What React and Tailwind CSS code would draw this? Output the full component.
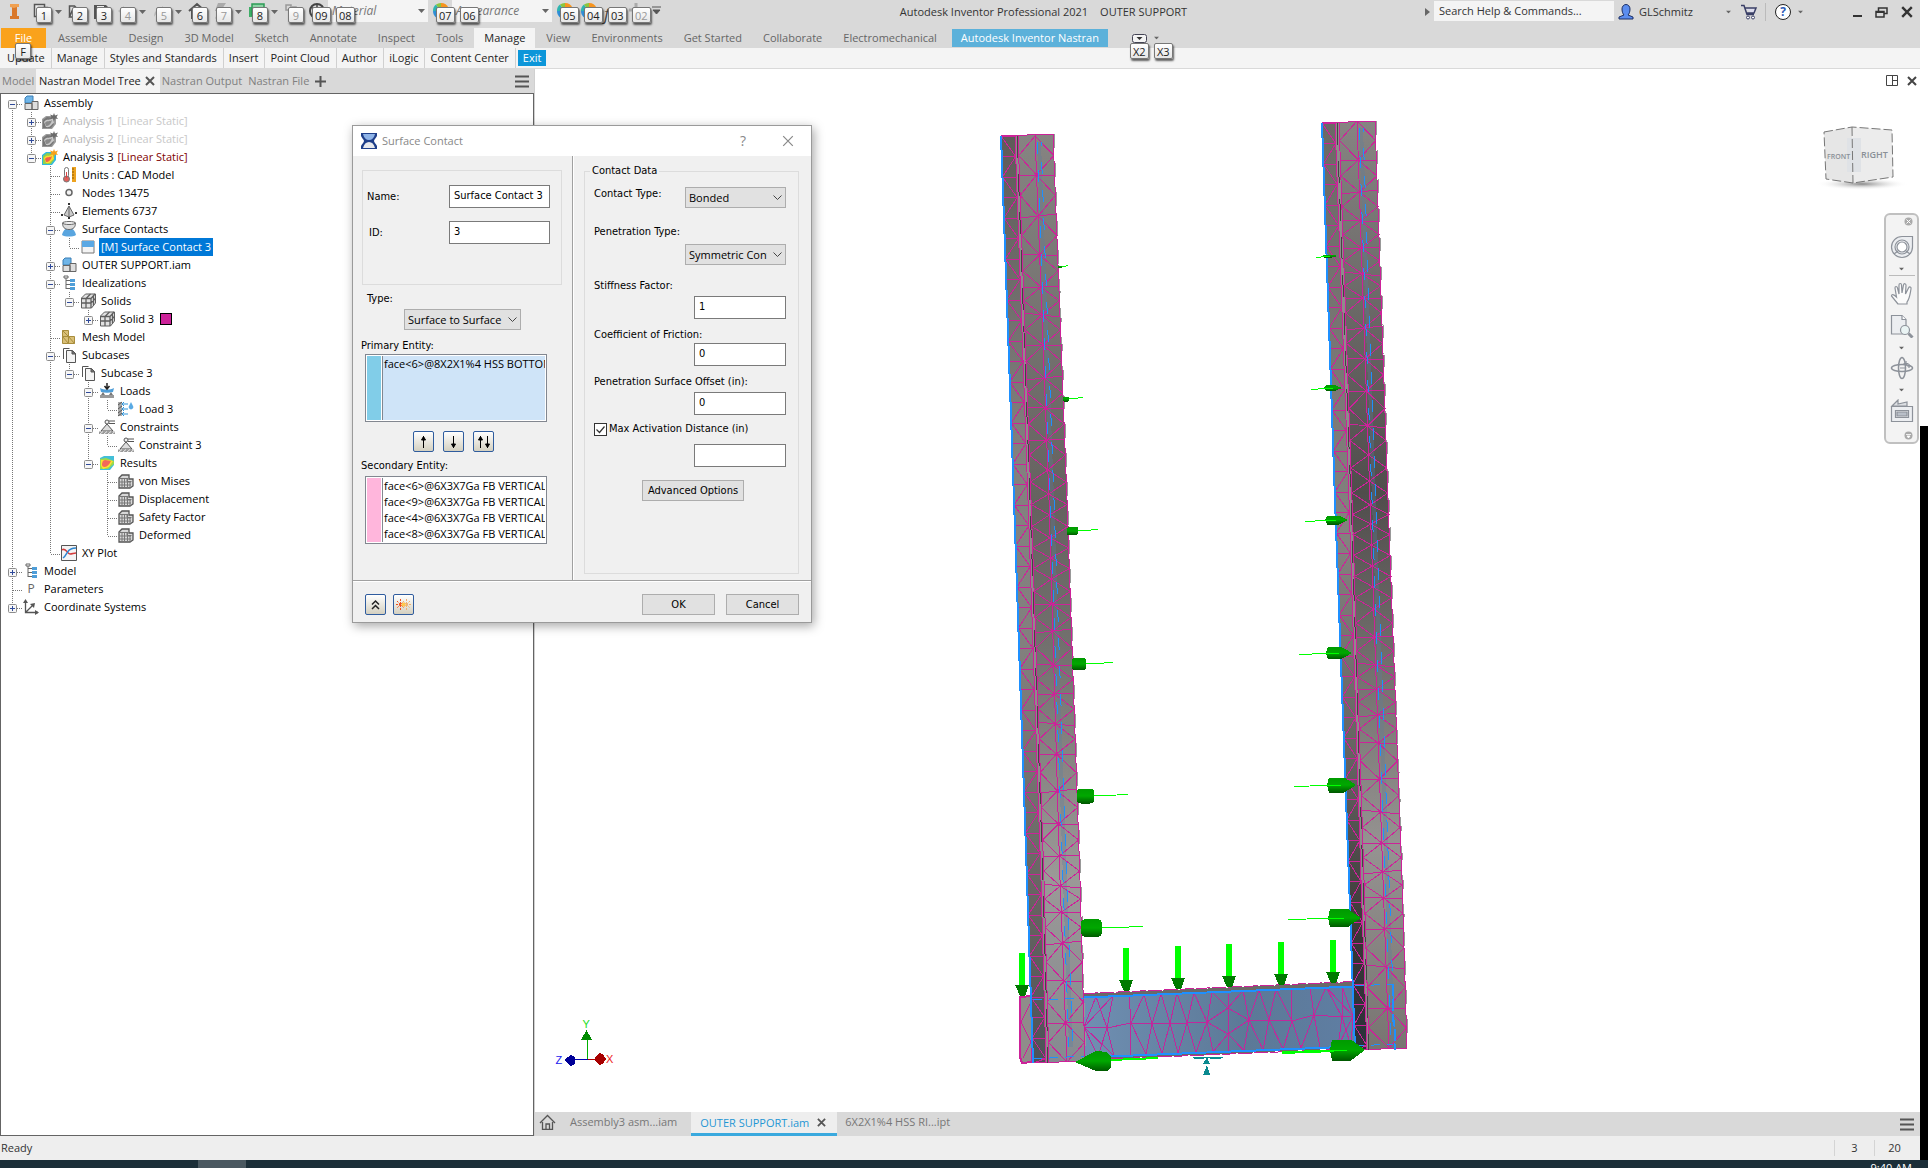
import { useState } from 'react';

const UI = "font-['Open_Sans','Noto_Sans',sans-serif]";
const DLG = "font-['DejaVu_Sans_Condensed','DejaVu_Sans',sans-serif]";

/* ---------- small shared pieces ---------- */

function Arrow({ className = '' }) {
    return (
        <svg width="7" height="4" viewBox="0 0 7 4" className={`shrink-0 ${className}`}>
            <path d="M0 0h7L3.500 4z" fill="#666" />
        </svg>
    );
}

function KeyTip({ text, dim, className = '' }) {
    return (
        <span
            className={`absolute z-10 flex h-4 min-w-4 items-center justify-center rounded-[2px] border border-[#777] bg-gradient-to-b from-white to-[#e6e6e6] px-[2px] text-[11px] leading-none shadow-[1px_2px_2px_rgba(0,0,0,0.6)] ${
                dim ? 'text-[#999]' : 'text-[#222]'
            } ${className}`}
        >
            {text}
        </span>
    );
}

function Cross({ size = 10, color = '#555', width = 2 }) {
    return (
        <svg width={size} height={size} viewBox="0 0 10 10" className="shrink-0">
            <path d="M1 1l8 8M9 1l-8 8" stroke={color} strokeWidth={width} />
        </svg>
    );
}

function Burger() {
    return (
        <svg width="14" height="13" viewBox="0 0 14 13" className="shrink-0">
            <path d="M0 1.500h14M0 6.500h14M0 11.500h14" stroke="#555" strokeWidth="2" />
        </svg>
    );
}

function Wheel() {
    return (
        <svg width="18" height="18" viewBox="0 0 18 18">
            <path d="M9 9L9 1A8 8 0 0 1 16.500 6z" fill="#f7941e" />
            <path d="M9 9L16.500 6A8 8 0 0 1 14 15.500z" fill="#f2582c" />
            <path d="M9 9L14 15.500A8 8 0 0 1 5 16z" fill="#c65ba0" />
            <path d="M9 9L5 16A8 8 0 0 1 1 9z" fill="#2f8fd8" />
            <path d="M9 9L1 9A8 8 0 0 1 4 2.500z" fill="#2fb5b0" />
            <path d="M9 9L4 2.500A8 8 0 0 1 9 1z" fill="#8cc63f" />
        </svg>
    );
}

const quickIcons = {
    new: (
        <path d="M2.500 2.500h10v12h-10zM6.500 5.500h9v11h-9z" fill="#eee" stroke="#555" strokeWidth="1.500" />
    ),
    open: (
        <path d="M1.500 15V4h5l2 2h5v3M1.500 15l3-7h12l-3 7z" fill="#ddd" stroke="#555" strokeWidth="1.500" />
    ),
    save: (
        <>
            <path d="M2 3h12l2 2v12H2z" fill="#555" />
            <path d="M5 4h7v4H5zM4 10h10v6H4z" fill="#eee" />
        </>
    ),
    undo: <path d="M2 9l6-5v3c6 0 8 3 8 8-2-4-4-4-8-4v3z" fill="#bbb" />,
    redo: <path d="M16 9l-6-5v3c-6 0-8 3-8 8 2-4 4-4 8-4v3z" fill="#bbb" />,
    home: (
        <path d="M1 9l8-7 8 7M4 8v8h10V8M7.500 16v-5h3v5" fill="none" stroke="#555" strokeWidth="2" />
    ),
    bolt: <path d="M6 1h8l-4 6h4L3 17l3-8H3z" fill="#aaa" />,
    window: (
        <>
            <path d="M1 5h11v10H1z" fill="#3fae67" />
            <path d="M4 2h12v11H4z" fill="#8fd3a6" stroke="#2d9c55" strokeWidth="1.500" />
        </>
    ),
    nodes: (
        <path d="M2 3h5v5H2zM8 5h4v4M10 10h5v5h-5z" fill="none" stroke="#999" strokeWidth="1.500" />
    ),
    globe: (
        <>
            <circle cx="9" cy="9" r="7" fill="#ddd" stroke="#444" strokeWidth="2" />
            <path d="M3 5l6 4 6-4M9 9v7M9 2v7" stroke="#444" strokeWidth="1.500" fill="none" />
        </>
    ),
    plus: <path d="M8 1v14M1 8h14" stroke="#aaa" strokeWidth="3" />,
};

function QuickButton({ icon, tip, dim, arrow, label, className }) {
    return (
        <button type="button" aria-label={label} className={`relative flex h-7 items-start pt-[2px] ${className}`}>
            {icon === 'wheel' ? (
                <Wheel />
            ) : (
                <svg width="18" height="18" viewBox="0 0 18 18" className="shrink-0">
                    {quickIcons[icon]}
                </svg>
            )}
            {arrow && <Arrow className="mt-2 ml-[5px]" />}
            <KeyTip text={tip} dim={dim} className="top-[7px] left-1" />
        </button>
    );
}

function QuickCombo({ text, tip }) {
    return (
        <button
            type="button"
            className="relative flex h-[22px] w-[100px] items-center justify-between bg-[#f4f4f4] pr-[3px] pl-1 text-[12px] text-[#777] italic"
        >
            {text}
            <Arrow />
            <KeyTip text={tip} className="top-[7px] left-2 not-italic" />
        </button>
    );
}

/* ---------- title bar and ribbon ---------- */

function TitleBar() {
    return (
        <header className="flex h-7 shrink-0 justify-between bg-[#d9d9d9] text-[11px] text-[#333]">
            <div className="flex shrink-0">
                <svg width="32" height="28" viewBox="0 0 32 28" className="shrink-0">
                    <path d="M10 4h9v3h-2v9h2v3h-9v-3h2V7h-2z" fill="#d9782b" />
                    <path d="M10 4h9v3h-2l-3 1-4-1z" fill="#f0a050" />
                </svg>
                <QuickButton icon="new" tip="1" arrow label="New" className="w-9" />
                <QuickButton icon="open" tip="2" label="Open" className="w-6" />
                <QuickButton icon="save" tip="3" label="Save" className="w-6" />
                <QuickButton icon="undo" tip="4" dim arrow label="Undo" className="w-9" />
                <QuickButton icon="redo" tip="5" dim arrow label="Redo" className="w-9" />
                <QuickButton icon="home" tip="6" label="Home" className="w-6" />
                <QuickButton icon="bolt" tip="7" dim arrow label="Update" className="w-9" />
                <QuickButton icon="window" tip="8" arrow label="Select" className="w-9" />
                <QuickButton icon="nodes" tip="9" dim label="Properties" className="w-6" />
                <QuickButton icon="globe" tip="09" label="Materials" className="w-5" />
                <QuickCombo text="Material" tip="08" />
                <QuickButton icon="wheel" tip="07" label="Appearance" className="ml-1 w-5" />
                <QuickCombo text="Appearance" tip="06" />
                <QuickButton icon="wheel" tip="05" label="Adjust" className="ml-1 w-6" />
                <QuickButton icon="wheel" tip="04" label="Clear" className="w-6" />
                <button type="button" className="relative w-6 text-left text-[17px] text-[#444] italic">
                    fx
                    <KeyTip text="03" className="top-[7px] left-1 not-italic" />
                </button>
                <QuickButton icon="plus" tip="02" dim label="Add" className="w-6" />
                <svg width="10" height="9" viewBox="0 0 10 9" className="mt-[6px]">
                    <path d="M0 1h9M1 4h7L4.500 8z" fill="#555" stroke="#555" />
                </svg>
            </div>
            <h1 className="flex h-6 flex-1 items-center justify-center gap-3">
                <span>Autodesk Inventor Professional 2021</span>
                <span>OUTER SUPPORT</span>
            </h1>
            <div className="flex shrink-0 justify-end">
                <div className="flex h-6 items-center">
                    <svg width="5" height="8" viewBox="0 0 5 8" className="mr-1">
                        <path d="M0 0l5 4-5 4z" fill="#666" />
                    </svg>
                    <input
                        aria-label="Search"
                        placeholder="Search Help & Commands..."
                        className="mb-[3px] h-5 w-[180px] bg-[#f4f4f4] px-[5px] text-[11px] placeholder-[#333] outline-none"
                    />
                    <svg width="16" height="16" viewBox="0 0 16 16" className="ml-1">
                        <path d="M4 5a4 4.500 0 0 1 8 0c0 3-1 5-2 6l5 2v2H1v-2l5-2c-1-1-2-3-2-6z" fill="#5b8def" stroke="#1c2f66" />
                    </svg>
                    <span className="ml-[5px] w-[86px]">GLSchmitz</span>
                    <Arrow className="scale-75" />
                    <svg width="18" height="16" viewBox="0 0 18 16" className="ml-2">
                        <path d="M1 1.500h3l3 9h7M4.500 4H16l-2 5H6.500" fill="#dde" stroke="#3a3f66" strokeWidth="1.500" />
                        <circle cx="8" cy="13.500" r="1.500" fill="#fff" stroke="#3a3f66" />
                        <circle cx="13" cy="13.500" r="1.500" fill="#fff" stroke="#3a3f66" />
                    </svg>
                    <span className="ml-[7px] h-[18px] w-px bg-[#bbb]" />
                    <button
                        type="button"
                        className="ml-[9px] flex h-4 w-4 items-center justify-center rounded-full border border-[#222] bg-white text-[12px] leading-none font-bold text-[#2e5cb8]"
                    >
                        ?
                    </button>
                    <Arrow className="ml-[6px] scale-75" />
                </div>
                <div className="flex h-6 items-center gap-[13px] pr-[7px] pl-[49px]">
                    <button type="button" aria-label="Minimize" className="mt-2 h-[2px] w-[9px] bg-[#333]" />
                    <button type="button" aria-label="Restore">
                        <svg width="13" height="11" viewBox="0 0 13 11">
                            <path d="M3.500 4V1H12v5.500H9.500M1 4.500h8V10H1z" fill="none" stroke="#333" strokeWidth="1.500" />
                            <path d="M1 5h8" stroke="#333" strokeWidth="2" />
                        </svg>
                    </button>
                    <button type="button" aria-label="Close">
                        <Cross size={12} color="#333" />
                    </button>
                </div>
            </div>
        </header>
    );
}

const tabs = [
    'Assemble',
    'Design',
    '3D Model',
    'Sketch',
    'Annotate',
    'Inspect',
    'Tools',
    'Manage',
    'View',
    'Environments',
    'Get Started',
    'Collaborate',
    'Electromechanical',
];

function Ribbon() {
    const panels = [
        'Update',
        'Manage',
        'Styles and Standards',
        'Insert',
        'Point Cloud',
        'Author',
        'iLogic',
        'Content Center',
    ];
    return (
        <>
            <nav className="flex h-5 shrink-0 bg-[#d9d9d9] pl-px text-[11px] text-[#666]">
                <button type="button" className="relative w-[45px] bg-[#faa21b] text-white">
                    File
                    <KeyTip text="F" className="top-[15px] left-[14px]" />
                </button>
                <div className="flex gap-px pl-[2px]">
                    {tabs.map((t) => (
                        <button
                            key={t}
                            type="button"
                            className={`px-[10px] ${t === 'Manage' ? 'bg-[#f4f4f4] text-[#222]' : ''}`}
                        >
                            {t}
                        </button>
                    ))}
                </div>
                <button type="button" className="my-px ml-[5px] bg-[#5cb1da] px-[9px] text-white">
                    Autodesk Inventor Nastran
                </button>
                <div className="relative ml-6 flex items-center gap-[6px]">
                    <svg width="15" height="9" viewBox="0 0 15 9">
                        <rect x=".5" y=".5" width="14" height="8" rx="2" fill="#f4f4f4" stroke="#445" />
                        <path d="M4.500 3h6l-3 3z" fill="#333" />
                    </svg>
                    <Arrow className="scale-75" />
                    <KeyTip text="X2" className="top-[15px] -left-[2px]" />
                    <KeyTip text="X3" className="top-[15px] left-[22px]" />
                </div>
            </nav>
            <div className="flex h-[21px] shrink-0 items-stretch border-b border-[#d9d9d9] bg-[#f4f4f4] text-[11px] text-[#222]">
                {panels.map((p) => (
                    <button
                        key={p}
                        type="button"
                        className="border-r border-[#d0d0d0] pr-[6px] pl-[5px] first:pl-[7px]"
                    >
                        {p}
                    </button>
                ))}
                <button type="button" className="mx-[2px] my-[2px] bg-[#0c96d9] px-[5px] text-white">
                    Exit
                </button>
            </div>
        </>
    );
}

/* ---------- model tree ---------- */

function AssemblyIcon() {
    return (
        <>
            <path d="M2 3l2-2h6v7H2z" fill="#6fb5e8" stroke="#3a7fb5" />
            <path d="M2 8.500h7v6H2zM9 6.500h6v8H9z" fill="#dedede" stroke="#666" />
        </>
    );
}

function CubeGrid() {
    return (
        <>
            <path d="M1.500 5l4-4h10v9l-4 5h-10z" fill="#e2e2e2" stroke="#5f5f5f" />
            <path d="M1.500 5.500h9.500v9.500M6 5.500V15M1.500 10H11M11 5.500L15 1M6 5.500L10.500 1M11 10l4.500-4.500M13.500 3v9.500" fill="none" stroke="#5f5f5f" strokeWidth="1.300" />
        </>
    );
}

function PagesIcon() {
    return (
        <>
            <path d="M2.500 12V1.500h6" fill="none" stroke="#555" />
            <path d="M5.500 3.500h6l3 3v9h-9z" fill="#f4f4f4" stroke="#555" />
            <path d="M11 3.500v3.500h3.500z" fill="#777" stroke="#555" />
        </>
    );
}

function HierarchyIcon() {
    return (
        <>
            <path d="M3 1h4v2H3zM5 3v11M5 5.500h4M5 9.500h4M5 13.500h4" fill="none" stroke="#666" />
            <path d="M9 4h5v3H9zM9 8h5v3H9zM9 12h5v3H9z" fill="#4f9ed8" />
        </>
    );
}

function AnalysisIcon({ dim }) {
    return (
        <>
            <path d="M0 6l4-3h10v8l-4 5H0z" fill={dim ? '#9a9a9a' : '#2fb8e0'} />
            <path d="M1 7l4-3 7 1v6l-3 4H1z" fill={dim ? '#777' : '#8fd14f'} />
            <path d="M2 9c3-4 6-1 9-4l1 5c-3 1-3 5-8 4z" fill={dim ? '#c8c8c8' : '#ffd92e'} />
            <path d="M3 10c2-3 5-1 7-3-1 4-3 6-6 6z" fill={dim ? '#8a8a8a' : '#f0604a'} />
            <path
                d="M12 0l1 2.500 3-1-1.500 2.500L16 6l-3-.5L12 8l-1-2.500L8 6l1.500-2L8 1.500l3 1z"
                fill={dim ? '#6a6a6a' : '#f7a11a'}
            />
        </>
    );
}

function ConstraintIcon() {
    return (
        <>
            <circle cx="8" cy="3" r="2" fill="#eee" stroke="#555" />
            <path d="M10 2h6M10 4.500h6" stroke="#555" />
            <path d="M8 5l6 7H2z" fill="#ddd" stroke="#555" />
            <path d="M0 12.500h16V15H0z" fill="#999" />
            <path d="M1 15l3-2.500M5 15l3-2.500M9 15l3-2.500M13 15l3-2.500" stroke="#eee" />
        </>
    );
}

function MeshIcon() {
    return (
        <>
            <path d="M1 5l3-3h7v4h4v7l-3 2H1z" fill="#d8d8d8" stroke="#555" strokeWidth="1.300" />
            <path d="M1 5.500h8v3h4.500M1 9h12M1 12h12M4 5v10M6.500 5v10M9.500 5v10M12 8.500V15" fill="none" stroke="#777" />
        </>
    );
}

const treeIcons = {
    assembly: <AssemblyIcon />,
    dim: <AnalysisIcon dim />,
    analysis: <AnalysisIcon />,
    units: (
        <>
            <rect x="3.500" y=".5" width="4" height="10" rx="2" fill="#fff" stroke="#777" />
            <circle cx="5.500" cy="12" r="3" fill="#e0605a" stroke="#777" />
            <path d="M5 5h1v6H5z" fill="#d44" />
            <path d="M11 0h4v15h-4z" fill="#eda320" />
            <path d="M11 2h2M11 5h2M11 8h2M11 11h2" stroke="#8a5a00" />
        </>
    ),
    node: <circle cx="8" cy="7.500" r="3" fill="#f4f4f4" stroke="#666" strokeWidth="1.500" />,
    element: (
        <>
            <path d="M8 3l5 9-5 2-5-2z" fill="#ccc" stroke="#666" />
            <path d="M8 3v11" stroke="#666" />
            <path d="M7 0h2v2H7zM0 11h2v2H0zM14 9h2v2h-2zM7 14h2v2H7z" fill="#333" />
        </>
    ),
    contacts: (
        <>
            <path d="M8 7c4 0 6 3 7 7-3 2-11 2-14 0 1-4 3-7 7-7z" fill="#59a5df" />
            <path d="M1.500 2c0 4 2 6.500 6.500 6.500S14.500 6 14.500 2z" fill="#ddd" stroke="#666" />
            <ellipse cx="8" cy="2" rx="6.500" ry="1.500" fill="#f4f4f4" stroke="#666" />
        </>
    ),
    contact: (
        <>
            <path d="M2 2h12v12H2z" fill="#f4f4f4" stroke="#777" />
            <path d="M2 2h12v6H2z" fill="#5aa8e4" />
        </>
    ),
    hierarchy: <HierarchyIcon />,
    solids: <CubeGrid />,
    meshmodel: (
        <>
            <path d="M1.500 1.500h6v6h-6zM1.500 7.500h6v7h-6zM7.500 7.500h6v7h-6z" fill="#d9bf77" stroke="#a88d3c" />
            <path d="M1.500 1.500l6 6M1.500 7.500l6 7M7.500 7.500l6 7" stroke="#a88d3c" />
        </>
    ),
    pages: <PagesIcon />,
    loads: (
        <>
            <path d="M1 5c4 2 10 2 14 0l-1 4c-4 1-8 1-12 0z" fill="#4f9ed8" />
            <path d="M8 0v5M5.500 3L8 6l2.500-3" fill="none" stroke="#222" strokeWidth="1.500" />
            <path d="M4 9l-2 3h4zM12 9l-2 3h4z" fill="#777" />
            <path d="M1 12h14v3H1z" fill="#999" />
        </>
    ),
    load: (
        <>
            <path d="M0 1h4v14H0z" fill="#aaa" />
            <path d="M0 4l4-3M0 8l4-3M0 12l4-3M0 15l4-3" stroke="#555" />
            <path d="M4 3h6M4 8h6M4 13h6M6 1L4 3l2 2M6 6L4 8l2 2M6 11l-2 2 2 2" fill="none" stroke="#2f93d8" />
            <path d="M13 1l2 4a2.300 2.300 0 1 1-4 0z" fill="#5aaae4" />
        </>
    ),
    constraint: <ConstraintIcon />,
    results: (
        <>
            <path d="M1 3l4-2h10v9l-4 5H1z" fill="#43bfd8" />
            <path d="M1 4l6-1 8 3v3l-6 5H1z" fill="#9ed94a" />
            <path d="M2 5l6 0 6 1-4 6-6 2-2-3z" fill="#ffe02e" />
            <path d="M4 6c2-2 5 0 8 0-2 4-4 6-7 6-3-1-2-4-1-6z" fill="#f2695a" />
        </>
    ),
    mesh: <MeshIcon />,
    plot: (
        <>
            <path d="M.5.500h15v15H.5z" fill="#f4f4f4" stroke="#555" />
            <path d="M1 5c4-3 5 4 8 4 2 0 4-1 6-1" fill="none" stroke="#d43c3c" strokeWidth="1.500" />
            <path d="M2 13c4-3 4-8 8-9 2-1 4-1 5-1" fill="none" stroke="#2f86d0" strokeWidth="1.500" />
        </>
    ),
    coord: (
        <>
            <path d="M2.500 2v11.500H15M2.500 13.500L10 6" fill="none" stroke="#555" strokeWidth="1.300" />
            <path d="M0 4l2.500-4L5 4zM12 11l4 2.500-4 2.500zM7 5l5-1-1 5z" fill="#555" />
        </>
    ),
};

// lanes: one character per indent level. "|" runs through, "+" branches,
// "L" ends there, "r" starts there and " " leaves the lane empty.
const tree = [
    { lanes: 'r', box: '-', icon: 'assembly', text: 'Assembly' },
    { lanes: '|+', box: '+', icon: 'dim', text: 'Analysis 1', tag: '[Linear Static]', dim: true },
    { lanes: '|+', box: '+', icon: 'dim', text: 'Analysis 2', tag: '[Linear Static]', dim: true },
    { lanes: '|L', box: '-', icon: 'analysis', text: 'Analysis 3', tag: '[Linear Static]' },
    { lanes: '| +', icon: 'units', text: 'Units : CAD Model' },
    { lanes: '| +', icon: 'node', text: 'Nodes 13475' },
    { lanes: '| +', icon: 'element', text: 'Elements 6737' },
    { lanes: '| +', box: '-', icon: 'contacts', text: 'Surface Contacts' },
    { lanes: '| |L', icon: 'contact', text: '[M] Surface Contact 3', selected: true },
    { lanes: '| +', box: '+', icon: 'assembly', text: 'OUTER SUPPORT.iam' },
    { lanes: '| +', box: '-', icon: 'hierarchy', text: 'Idealizations' },
    { lanes: '| |L', box: '-', icon: 'solids', text: 'Solids' },
    { lanes: '| | L', box: '+', icon: 'solids', text: 'Solid 3', swatch: true },
    { lanes: '| +', icon: 'meshmodel', text: 'Mesh Model' },
    { lanes: '| +', box: '-', icon: 'pages', text: 'Subcases' },
    { lanes: '| |L', box: '-', icon: 'pages', text: 'Subcase 3' },
    { lanes: '| | +', box: '-', icon: 'loads', text: 'Loads' },
    { lanes: '| | |L', icon: 'load', text: 'Load 3' },
    { lanes: '| | +', box: '-', icon: 'constraint', text: 'Constraints' },
    { lanes: '| | |L', icon: 'constraint', text: 'Constraint 3' },
    { lanes: '| | L', box: '-', icon: 'results', text: 'Results' },
    { lanes: '| |  +', icon: 'mesh', text: 'von Mises' },
    { lanes: '| |  +', icon: 'mesh', text: 'Displacement' },
    { lanes: '| |  +', icon: 'mesh', text: 'Safety Factor' },
    { lanes: '| |  L', icon: 'mesh', text: 'Deformed' },
    { lanes: '| L', icon: 'plot', text: 'XY Plot' },
    { lanes: '+', box: '+', icon: 'hierarchy', text: 'Model' },
    { lanes: '+', letter: 'P', text: 'Parameters' },
    { lanes: 'L', box: '+', icon: 'coord', text: 'Coordinate Systems' },
];

// subcases close their own lane, so everything below them only keeps lanes 0 and 2
function Lane({ kind, box }) {
    const top = kind === 'r' ? 10 : 0;
    const bottom = kind === 'L' ? 10 : 18;
    return (
        <svg width="19" height="18" viewBox="0 0 19 18" className="shrink-0">
            {kind !== ' ' && (
                <path d={`M9.500 ${top}V${bottom}`} stroke="#777" strokeDasharray="1 1" />
            )}
            {kind !== ' ' && kind !== '|' && (
                <path d="M10 10.500H19" stroke="#777" strokeDasharray="1 1" />
            )}
            {box && (
                <>
                    <rect x="5.500" y="6.500" width="8" height="8" rx="1" fill="#f6f6f6" stroke="#8c8c8c" />
                    <path d={box === '+' ? 'M7 10.500h5M9.500 8v5' : 'M7 10.500h5'} stroke="#2f4a9a" />
                </>
            )}
        </svg>
    );
}

function TreeRow({ row }) {
    const lanes = row.lanes.split('');
    return (
        <li className="flex h-[18px] items-center">
            {lanes.map((kind, i) => (
                <Lane key={i} kind={kind} box={i === lanes.length - 1 ? row.box : undefined} />
            ))}
            <span className="flex w-[18px] shrink-0 justify-center text-[12px] text-[#666]">
                {row.letter ? (
                    row.letter
                ) : (
                    <svg width="16" height="16" viewBox="0 0 16 16">
                        {treeIcons[row.icon]}
                    </svg>
                )}
            </span>
            <span
                className={`ml-[2px] flex h-[18px] items-center px-[2px] ${
                    row.selected ? 'bg-[#0078d7] text-white' : row.dim ? 'text-[#b4b4b4]' : 'text-black'
                }`}
            >
                {row.text}
                {row.tag && (
                    <span className={`ml-1 ${row.dim ? 'text-[#c8c8c8]' : 'text-[#800000]'}`}>{row.tag}</span>
                )}
                {row.swatch && <span className="ml-[6px] h-3 w-3 border border-black bg-[#cc2299]" />}
            </span>
        </li>
    );
}

function ModelPanel() {
    return (
        <aside className="flex w-[534px] shrink-0 flex-col bg-[#d9d9d9] text-[11px]">
            <div className="flex h-6 shrink-0 items-center text-[#808080]">
                <button type="button" className="w-9 pl-[2px] text-left">
                    Model
                </button>
                <button
                    type="button"
                    className="flex h-6 items-center gap-1 bg-[#f4f4f4] pr-[5px] pl-[3px] text-[#222]"
                >
                    Nastran Model Tree
                    <Cross />
                </button>
                <button type="button" className="ml-[2px]">
                    Nastran Output
                </button>
                <button type="button" className="ml-[6px]">
                    Nastran File
                </button>
                <button type="button" aria-label="Add panel" className="ml-[6px]">
                    <svg width="11" height="11" viewBox="0 0 11 11">
                        <path d="M5.500 0v11M0 5.500h11" stroke="#555" strokeWidth="2" />
                    </svg>
                </button>
                <button type="button" aria-label="Panel menu" className="mr-[5px] ml-auto">
                    <Burger />
                </button>
            </div>
            <ul className="flex-1 border border-[#646464] bg-white pl-[2px]">
                {tree.map((row, i) => (
                    <TreeRow key={i} row={row} />
                ))}
            </ul>
        </aside>
    );
}

/* ---------- 3D canvas ---------- */

const MESH = '#cc2299';
const BLUE = '#1e90ff';

// x of an edge at height y, walking through a list of [x, y] points
function at(line, y) {
    for (let i = 1; i < line.length; i++) {
        const [x0, y0] = line[i - 1];
        const [x1, y1] = line[i];
        if (y <= y1 || i === line.length - 1) return x0 + ((x1 - x0) * (y - y0)) / (y1 - y0);
    }
    return 0;
}

function pts(line) {
    return line.map((p) => p.join(',')).join(' ');
}

function faceMesh(left, mid, right, ys, bare) {
    let d = '';
    ys.forEach((y, i) => {
        const mx = at(mid, y);
        const next = ys[i + 1];
        if (i > 0 && next && !(y > bare[0] && y < bare[1])) {
            const tilt = ((i * 7) % 5) - 2;
            d += `M${at(left, y + tilt)} ${y + tilt}L${mx} ${y}L${at(right, y - tilt)} ${y - tilt}`;
        }
        if (next) {
            const h = (y + next) / 2;
            d += `M${mx} ${y}L${at(left, h)} ${h}L${at(mid, next)} ${next}`;
            d += `M${mx} ${y}L${at(right, h)} ${h}L${at(mid, next)} ${next}`;
        }
    });
    return d;
}

function flangeMesh(left, right, top, bottom) {
    let d = '';
    let flip = false;
    for (let y = top; y < bottom; y += 20.500) {
        const y2 = Math.min(y + 20.500, bottom);
        d += `M${at(left, y)} ${y}L${at(right, y)} ${y}`;
        d += flip
            ? `M${at(right, y)} ${y}L${at(left, y2)} ${y2}`
            : `M${at(left, y)} ${y}L${at(right, y2)} ${y2}`;
        flip = !flip;
    }
    return d;
}

const leftBeam = {
    outer: [[1001, 136], [1014, 500], [1027, 880], [1033, 1063]],
    groove: [[1015, 136], [1028, 500], [1041, 880], [1046, 1063]],
    face: [[1018, 136], [1031, 500], [1044, 880], [1049, 1063]],
    mid: [[1035, 135], [1049, 500], [1060, 880], [1067, 1062]],
    right: [[1053, 134], [1067, 500], [1080, 880], [1085, 1061]],
    dash: [[1037, 142], [1050, 500], [1063, 880], [1069, 1047]],
    ys: [136, 175, 216, 255, 287, 315, 345, 378, 408, 440, 470, 494, 515, 538, 558, 579, 604, 631, 665, 694, 724, 754, 791, 824, 856, 886, 912, 943, 981, 1023, 1062],
    bare: [450, 600],
};

const rightBeam = {
    outer: [[1322, 123], [1335, 500], [1349, 880], [1355, 1050]],
    groove: [[1335, 123], [1349, 500], [1361, 880], [1367, 1050]],
    face: [[1339, 122], [1352, 500], [1364, 880], [1369, 1050]],
    mid: [[1357, 121], [1370, 500], [1383, 880], [1389, 1049]],
    right: [[1375, 121], [1388, 500], [1402, 880], [1407, 1048]],
    dash: [[1359, 128], [1372, 500], [1385, 880], [1391, 1048]],
    ys: [121, 160, 192, 221, 248, 274, 298, 328, 359, 391, 426, 455, 481, 505, 524, 545, 566, 587, 609, 637, 665, 689, 715, 743, 779, 812, 843, 872, 898, 929, 967, 1008, 1048],
    bare: [430, 625],
};

function Beam({ beam, wide, narrow }) {
    const { outer, groove, face, mid, right, dash, ys, bare } = beam;
    const top = outer[0][1];
    const bottom = outer[3][1];
    const rev = (l) => [...l].reverse();
    const shifted = dash.map(([x, y]) => [x + 4, y]);
    return (
        <g fill="none">
            <polygon points={pts([...outer, ...rev(groove)])} fill={narrow} />
            <polygon points={pts([...groove, ...rev(face)])} fill="#8d8d8a" />
            <polygon points={pts([...face, ...rev(right)])} fill={wide} />
            <polygon points={pts([...dash, ...rev(shifted)])} fill="#5b7f9f" fillOpacity="0.3" />
            <g stroke={MESH} strokeWidth="1">
                <path d={flangeMesh(outer, groove, top, bottom)} />
                <path d={faceMesh(face, mid, right, ys, bare)} />
                <polyline points={pts(mid)} />
                <polyline points={pts(face)} />
                <polyline points={pts(groove)} />
                <polyline points={pts(right)} />
                <path d={`M${outer[0]}L${right[0]}M${outer[3]}L${right[3]}`} />
            </g>
            <polyline points={pts(groove.map(([x, y]) => [x + 2, y]))} stroke="#444" strokeDasharray="22 16" />
            <polyline points={pts(right.map(([x, y]) => [x + 1, y]))} stroke="#999" strokeDasharray="14 15" />
            <polyline points={pts(dash)} stroke={BLUE} strokeDasharray="12 16" />
            <polyline points={pts(shifted)} stroke={BLUE} strokeDasharray="12 16" strokeDashoffset="8" />
            <polyline points={pts(outer)} stroke={BLUE} strokeWidth="2" />
        </g>
    );
}

// cross beam nodes
const crossMid = [[1084, 1027], [1107, 1028], [1131, 1023], [1152, 1024], [1170, 1023], [1187, 1023], [1207, 1022]];
const crossMid2 = [[1249, 1020], [1269, 1020], [1292, 1021], [1314, 1015], [1342, 1017], [1353, 1016]];
const topX = [1096, 1113, 1129, 1144, 1161, 1177, 1194, 1212, 1228, 1243, 1259, 1276, 1291, 1310, 1326, 1342];
const bottomX = [1098, 1114, 1130, 1146, 1162, 1178, 1196, 1213, 1228, 1244, 1263, 1283, 1301, 1320, 1338, 1351];

function crossMesh() {
    const ty = (x) => 997 - ((x - 1084) * 11) / 270;
    const by = (x) => 1057 - ((x - 1084) * 11) / 270;
    let d = `M${crossMid.join('L')}M${crossMid2.join('L')}`;
    d += 'M1207 1022L1228 1008L1249 1020L1228 1034ZM1228 994V1052';
    [...crossMid, ...crossMid2].forEach(([x, y]) => {
        const near = (list) =>
            [...list].sort((a, b) => Math.abs(a - x) - Math.abs(b - x)).slice(0, 2);
        near(topX).forEach((n) => (d += `M${x} ${y}L${n} ${ty(n)}`));
        near(bottomX).forEach((n) => (d += `M${x} ${y}L${n} ${by(n)}`));
    });
    d += `M1228 1008L1212 ${ty(1212)}M1228 1008L1243 ${ty(1243)}`;
    d += `M1228 1034L1213 ${by(1213)}M1228 1034L1244 ${by(1244)}`;
    return d;
}

// [x, y, width, height, line end]
const pinsLeft = [
    [1058, 267, 4, 2, 1068],
    [1063, 399, 6, 5, 1083],
    [1067, 531, 11, 8, 1098],
    [1072, 664, 14, 12, 1113],
    [1077, 796, 17, 15, 1128],
    [1081, 928, 21, 18, 1143],
];
const pinsRight = [
    [1322, 256, 16, 3, 1316],
    [1324, 388, 18, 6, 1311],
    [1325, 520, 23, 9, 1305],
    [1326, 653, 26, 12, 1299],
    [1327, 785, 29, 15, 1294],
    [1328, 918, 33, 18, 1288],
    [1330, 1050, 35, 21, 1282],
];
const loads = [
    [1022, 953],
    [1126, 948],
    [1178, 946],
    [1229, 944],
    [1281, 942],
    [1333, 940],
];

function Model3D() {
    return (
        <svg viewBox="535 69 1385 1043" className="h-full w-full" preserveAspectRatio="xMidYMid meet">
            <defs>
                <linearGradient id="lw" x1="0" y1="0" x2="0" y2="1">
                    <stop offset="0" stopColor="#868482" />
                    <stop offset=".4" stopColor="#65625f" />
                    <stop offset=".55" stopColor="#72706e" />
                    <stop offset=".8" stopColor="#9b9997" />
                    <stop offset="1" stopColor="#858a90" />
                </linearGradient>
                <linearGradient id="ln" x1="0" y1="0" x2="0" y2="1">
                    <stop offset="0" stopColor="#5e5b59" />
                    <stop offset=".35" stopColor="#83817f" />
                    <stop offset=".55" stopColor="#82807e" />
                    <stop offset=".85" stopColor="#64615f" />
                    <stop offset="1" stopColor="#4d5258" />
                </linearGradient>
                <linearGradient id="rw" x1="0" y1="0" x2="0" y2="1">
                    <stop offset="0" stopColor="#868482" />
                    <stop offset=".4" stopColor="#504d4c" />
                    <stop offset=".55" stopColor="#6c6967" />
                    <stop offset=".78" stopColor="#959391" />
                    <stop offset="1" stopColor="#787471" />
                </linearGradient>
                <linearGradient id="rn" x1="0" y1="0" x2="0" y2="1">
                    <stop offset="0" stopColor="#6b6866" />
                    <stop offset=".45" stopColor="#84827f" />
                    <stop offset=".7" stopColor="#62605e" />
                    <stop offset=".88" stopColor="#383635" />
                    <stop offset="1" stopColor="#2b313b" />
                </linearGradient>
                <linearGradient id="cross" x1="0" y1="0" x2="1" y2="0">
                    <stop offset="0" stopColor="#6f8fb2" />
                    <stop offset=".6" stopColor="#5c7997" />
                    <stop offset="1" stopColor="#5f7ea3" />
                </linearGradient>
                <linearGradient id="pin" x1="0" y1="0" x2="0" y2="1">
                    <stop offset="0" stopColor="#009a00" />
                    <stop offset=".5" stopColor="#00a800" />
                    <stop offset="1" stopColor="#005a00" />
                </linearGradient>
            </defs>

            <g shapeRendering="crispEdges">
                {/* end of the cross beam behind the left post */}
                <path d="M1020 997l12-1v66l-10 1-2-6z" fill="#8f8c8a" stroke={MESH} strokeWidth="2" />
                <path d="M1021 1022l10-20M1021 1022l10 20-8 16" fill="none" stroke={MESH} />

                <path d="M1084 994L1354 982v66l-270 12z" fill="#6b6967" />
                <path d="M1084 997L1354 986v60l-270 12z" fill="url(#cross)" />
                <path d={crossMesh()} fill="none" stroke="#c0289c" />
                <path d="M1084 993.500L1354 981.500M1110 1059L1350 1049" fill="none" stroke={MESH} strokeDasharray="14 2" />
                <path d="M1084 997.500L1354 986.500M1084 1057.500L1354 1046.500" fill="none" stroke={BLUE} strokeWidth="2" />

                <Beam beam={leftBeam} wide="url(#lw)" narrow="url(#ln)" />
                <Beam beam={rightBeam} wide="url(#rw)" narrow="url(#rn)" />

                <g fill="none" stroke={BLUE} strokeDasharray="9 7">
                    <path d="M1033 1000l51-2M1033 1059l51-3M1355 986l38-2M1355 1046l38-2" />
                </g>
                <path d="M1393 984v36l2 8v22" fill="none" stroke={BLUE} strokeDasharray="12 3" strokeWidth="2" />

                {pinsLeft.map(([x, y, w, h, end]) => (
                    <g key={y}>
                        <path d={`M${x + w} ${y}L${end} ${y - 1.500}`} stroke="#00ff00" />
                        <rect x={x} y={y - h / 2} width={w} height={h} rx={h / 4} fill="url(#pin)" />
                    </g>
                ))}
                {pinsRight.map(([x, y, w, h, end]) => (
                    <g key={y}>
                        <path
                            d={`M${x + 2} ${y - h / 2}H${x + w * 0.600}L${x + w} ${y}L${x + w * 0.600} ${y + h / 2}H${x + 2}L${x} ${y}z`}
                            fill="url(#pin)"
                        />
                        <path d={`M${end} ${y + 1.500}L${x + w / 2} ${y}`} stroke="#00ff00" />
                    </g>
                ))}
                <path d="M1075 1062l21-11 11 1 4 5v10l-4 4h-11z" fill="url(#pin)" />
                <path d="M1111 1060l47-2M1282 1053l52-2" stroke="#00ff00" strokeWidth="2" />

                {loads.map(([x, y]) => (
                    <g key={x}>
                        <path d={`M${x - 3} ${y}h6v32h-6z`} fill="#00ff00" />
                        <path d={`M${x - 7} ${y + 32}h14l-4 11h-5z`} fill="#007a00" />
                    </g>
                ))}

                <path d="M1192 1057h32l-4 2h-7l-6-1-6 1h-6zM1207 1057l3 7h-7zM1207 1065l3 10h-7z" fill="#0a8a90" />

                {/* axis triad */}
                <path d="M587.500 1036v23" stroke="#00b000" />
                <path d="M574 1059.500h14" stroke="#0000b0" />
                <path d="M588 1059.500h8" stroke="#b00000" />
                <path d="M586.500 1030l5.500 10h-11z" fill="#008a00" />
                <path d="M564 1060l7-5 4 2v7l-4 2z" fill="#000098" />
                <path d="M595 1057l4-4 4 1 3 5-3 5-4 1-4-4z" fill="#a80000" />
            </g>
            <g fontFamily="Liberation Sans, sans-serif" fontSize="11">
                <text x="582.500" y="1028" fill="#22dd22">Y</text>
                <text x="555.500" y="1064" fill="#2222ee">Z</text>
                <text x="606" y="1063" fill="#ee2222">X</text>
            </g>
        </svg>
    );
}

function ViewCube() {
    return (
        <svg width="96" height="68" viewBox="0 0 96 68" className="absolute top-[57px] right-[10px]">
            <defs>
                <radialGradient id="cubeShadow">
                    <stop offset="0" stopColor="#888" />
                    <stop offset="1" stopColor="#fff" stopOpacity="0" />
                </radialGradient>
            </defs>
            <ellipse cx="48" cy="58" rx="46" ry="6" fill="url(#cubeShadow)" />
            <path d="M10 6l28-5 1 56-27-4z" fill="#e6e6e6" />
            <path d="M38 1l40 3 1 47-40 6z" fill="#ececec" />
            <path d="M33 12h14v34H33z" fill="#dfe2e6" />
            <path
                d="M10 6l28-5 40 3 1 47-40 6-27-4zM38 1l1 56"
                fill="none"
                stroke="#777"
                strokeDasharray="9 3"
            />
            <g fontFamily="Open Sans, sans-serif" fontWeight="600" fill="#8a9097">
                <text x="13" y="33" fontSize="7">
                    FRONT
                </text>
                <text x="47" y="32" fontSize="9">
                    RIGHT
                </text>
            </g>
        </svg>
    );
}

function NavButton({ label, children, className }) {
    return (
        <button type="button" aria-label={label} className={className}>
            <svg width="24" height="24" viewBox="0 0 24 24" fill="#eceef1" stroke="#8d929a" strokeWidth="1.200">
                {children}
            </svg>
        </button>
    );
}

function NavBar() {
    return (
        <div className="absolute top-[144px] right-px flex h-[231px] w-[35px] flex-col items-center rounded-[6px] border-2 border-[#c0c0c0] bg-[#f3f3f3]">
            <svg width="9" height="9" viewBox="0 0 9 9" className="mt-[2px] mr-1 shrink-0 self-end">
                <circle cx="4.500" cy="4.500" r="4" fill="#aaa" />
                <path d="M2.500 2.500l4 4M6.500 2.500l-4 4" stroke="#fff" />
            </svg>
            <NavButton label="Full Navigation Wheel" className="mt-[9px]">
                <path d="M12 1.500h10.500V12A10.500 10.500 0 1 1 12 1.500z" />
                <circle cx="12" cy="12" r="7" />
                <circle cx="12" cy="12" r="5" fill="#fff" />
                <path d="M4 19l4-3M20 19l-4-3" />
            </NavButton>
            <Arrow className="mt-2 scale-75" />
            <span className="mt-1 h-px w-[26px] shrink-0 bg-[#bbb]" />
            <NavButton label="Pan" className="mt-[6px]">
                <path d="M8 22L1.500 14c0-2 2-2 5 1L5 6c0-2 2-2 2.500 0L9 12V3c0-2 2.500-2 2.500 0l.5 8 1.500-8c.5-2 2.500-1.500 2.500.5L15.500 12l3-6c1-2 3-1 2.500 1-1 5-1 9-4 13v2z" fill="#fbfbfb" />
            </NavButton>
            <NavButton label="Zoom" className="mt-2">
                <path d="M1.500 1.500H12l4 4V20H1.500z" />
                <path d="M12 1.500v4h4" fill="#fff" />
                <circle cx="15" cy="16" r="4.500" fill="#eaf4f4" />
                <path d="M18.500 19.500l4 4" strokeWidth="3" />
            </NavButton>
            <Arrow className="mt-2 scale-75" />
            <NavButton label="Orbit" className="mt-[6px]">
                <ellipse cx="12" cy="12" rx="3.500" ry="10.500" fill="none" strokeWidth="1.500" />
                <ellipse cx="12" cy="12" rx="10.500" ry="3.500" fill="none" strokeWidth="1.500" />
                <path d="M16 5v5M13.500 7.500h5M19 8v4M17 10h4M10 12h5" />
            </NavButton>
            <Arrow className="mt-2 scale-75" />
            <NavButton label="Look At" className="mt-[7px]">
                <path d="M1.500 7.500h21v15h-21zM5.500 11.500h13v7h-13z" />
                <path d="M7 13h10v4H7z" fill="#b9bfc8" />
                <path d="M2 7l6-6v4l9-2v4z" fill="#dcdfe3" />
            </NavButton>
            <svg width="9" height="9" viewBox="0 0 9 9" className="mt-auto mr-1 mb-[2px] shrink-0 self-end">
                <circle cx="4.500" cy="4.500" r="4" fill="#aaa" />
                <path d="M2 3.500h5M3 5h3l-1.500 2z" stroke="#fff" strokeWidth=".8" fill="#fff" />
            </svg>
        </div>
    );
}

function Viewport() {
    return (
        <main className="flex min-w-0 flex-1 flex-col border-l border-[#d0d0d0] bg-white">
            <div className="relative min-h-0 flex-1">
                <Model3D />
                <div className="absolute top-[6px] right-[3px] flex items-center gap-[9px]">
                    <svg width="12" height="11" viewBox="0 0 12 11">
                        <path d="M.5.500h11v10H.5zM6.500.500v10M6.500 5.500h5" fill="none" stroke="#444" />
                    </svg>
                    <Cross color="#444" />
                </div>
                <ViewCube />
                <NavBar />
            </div>
            <div className="flex h-6 shrink-0 items-center bg-[#d9d9d9] text-[11px] text-[#777]">
                <svg width="17" height="16" viewBox="0 0 17 16" className="mb-1 ml-[4px]">
                    <path d="M1 9l7.500-7.500L16 9M3.500 8v7.500h10V8M7 15v-5h3.500v5" fill="none" stroke="#555" strokeWidth="1.300" />
                </svg>
                <button type="button" className="mb-1 px-[14px]">
                    Assembly3 asm...iam
                </button>
                <button
                    type="button"
                    className="flex h-6 items-center gap-2 border-b-[3px] border-[#3aa9de] bg-[#eee] pr-[11px] pl-[9px] text-[#1e96d4]"
                >
                    OUTER SUPPORT.iam
                    <Cross size={9} />
                </button>
                <button type="button" className="mb-1 px-2">
                    6X2X1%4 HSS RI...ipt
                </button>
                <button type="button" aria-label="Document menu" className="mr-[6px] ml-auto">
                    <Burger />
                </button>
            </div>
        </main>
    );
}

/* ---------- Surface Contact dialog ---------- */

function Select({ id, options, className = '' }) {
    return (
        <span className={`relative flex h-[21px] ${className}`}>
            <select
                id={id}
                className="w-full appearance-none overflow-hidden border border-[#adadad] bg-[#e1e1e1] pr-[18px] pl-[3px] font-['Open_Sans',sans-serif] text-[11px] outline-none"
            >
                {options.map((o) => (
                    <option key={o}>{o}</option>
                ))}
            </select>
            <svg width="9" height="6" viewBox="0 0 9 6" className="pointer-events-none absolute top-2 right-1">
                <path d="M.5.500l4 4 4-4" fill="none" stroke="#444" />
            </svg>
        </span>
    );
}

function Field({ id, value = '', className = '', label }) {
    const [text, setText] = useState(value);
    return (
        <input
            id={id}
            type="text"
            aria-label={label}
            value={text}
            onChange={(e) => setText(e.target.value)}
            className={`h-[23px] border border-[#7a7a7a] bg-white pb-[3px] pl-1 text-[11px] outline-none ${className}`}
        />
    );
}

function ToolButton({ label, children }) {
    return (
        <button
            type="button"
            aria-label={label}
            className="flex h-[21px] w-[21px] items-center justify-center rounded-[2px] border border-[#2f5c9e] bg-gradient-to-b from-white to-[#d4d0c0]"
        >
            {children}
        </button>
    );
}

function EntityList({ items, bar, fill }) {
    return (
        <div className="ml-1 flex h-[68px] w-[182px] border border-[#828790] bg-white p-px font-['Open_Sans',sans-serif]">
            <div className={`w-[14px] shrink-0 ${bar}`} />
            <ul className={`ml-px flex-1 overflow-hidden border-l border-[#828790] leading-4 whitespace-nowrap ${fill}`}>
                {items.map((t) => (
                    <li key={t} className="pl-px">
                        {t}
                    </li>
                ))}
            </ul>
        </div>
    );
}

function SurfaceContact() {
    const [maxDistance, setMaxDistance] = useState(true);
    return (
        <section
            role="dialog"
            aria-label="Surface Contact"
            className={`absolute top-[125px] left-[352px] z-20 flex w-[460px] flex-col border border-[#9a9a9a] bg-[#f0f0f0] text-[11px] leading-[14px] text-black shadow-[2px_3px_10px_rgba(0,0,0,0.35)] ${DLG}`}
        >
            <div className="flex h-[30px] items-center bg-white pr-[17px] pl-2 font-['Open_Sans',sans-serif] text-[11px] text-[#888]">
                <svg width="16" height="16" viewBox="0 0 16 16">
                    <path d="M0 0h16v3c-2 3-3 4-3 5s2 3 3 5v3H0v-3c1-2 3-4 3-5S1 5 0 3z" fill="#1f3f8a" />
                    <path d="M2 1h12c-1 4-3 6-6 6S3 5 2 1z" fill="#8fb4e8" />
                    <path d="M2 15c1-4 3-6 6-6s5 2 6 6z" fill="#e8eaee" />
                </svg>
                <span className="ml-[5px]">Surface Contact</span>
                <button type="button" className="ml-auto text-[14px]">
                    ?
                </button>
                <button type="button" aria-label="Close dialog" className="ml-9">
                    <Cross size={12} color="#888" width={1} />
                </button>
            </div>

            <div className="flex border-b border-[#a0a0a0]">
                <div className="flex w-[220px] shrink-0 flex-col border-r border-[#a0a0a0] pt-[14px] pl-[8px]">
                    <div className="ml-px flex h-[115px] w-[200px] flex-col gap-[13px] border border-[#dcdcdc] pt-[14px] pr-[11px] pl-1">
                        <div className="flex items-center justify-between">
                            <label htmlFor="name">Name:</label>
                            <Field id="name" value="Surface Contact 3" className="w-[101px]" />
                        </div>
                        <div className="flex items-center justify-between">
                            <label htmlFor="cid" className="pl-[2px]">ID:</label>
                            <Field id="cid" value="3" className="w-[101px]" />
                        </div>
                    </div>
                    <label htmlFor="ctype" className="mt-[7px] ml-[6px]">
                        Type:
                    </label>
                    <Select id="ctype" options={['Surface to Surface', 'Edge to Surface']} className="mt-[3px] ml-[43px] w-[117px]" />
                    <span className="mt-[9px]">Primary Entity:</span>
                    <div className="mt-px">
                        <EntityList items={['face<6>@8X2X1%4 HSS BOTTOM']} bar="bg-[#81cde8]" fill="bg-[#cfe4f8]" />
                    </div>
                    <div className="mt-[9px] ml-[52px] flex gap-[9px]">
                        <ToolButton label="Move up">
                            <svg width="13" height="16" viewBox="0 0 13 16" stroke="#000">
                                <path d="M6.500 2v12M4.500 6L6.500 2.500l2 3.500z" />
                            </svg>
                        </ToolButton>
                        <ToolButton label="Move down">
                            <svg width="13" height="16" viewBox="0 0 13 16" stroke="#000">
                                <path d="M6.500 2v12M4.500 10l2 3.500 2-3.500z" />
                            </svg>
                        </ToolButton>
                        <ToolButton label="Swap">
                            <svg width="16" height="16" viewBox="0 0 16 16" stroke="#000">
                                <path d="M4.500 2v12M2.500 6l2-3.500 2 3.500zM11.500 2v12M9.500 10l2 3.500 2-3.500z" />
                            </svg>
                        </ToolButton>
                    </div>
                    <span className="mt-[7px]">Secondary Entity:</span>
                    <div className="mt-[3px]">
                        <EntityList
                            items={[
                                'face<6>@6X3X7Ga FB VERTICAL',
                                'face<9>@6X3X7Ga FB VERTICAL',
                                'face<4>@6X3X7Ga FB VERTICAL',
                                'face<8>@6X3X7Ga FB VERTICAL',
                            ]}
                            bar="bg-[#ffb6dc]"
                            fill="bg-white"
                        />
                    </div>
                </div>

                <div className="flex-1 border-l border-white pt-2 pr-3 pb-[6px] pl-[10px]">
                    <fieldset className="flex h-[410px] flex-col border border-[#dcdcdc] pr-[12px] pl-[9px]">
                        <legend className="-ml-[4px] px-[2px]">Contact Data</legend>
                        <div className="mt-[9px] flex items-start justify-between">
                            <label htmlFor="contactType">Contact Type:</label>
                            <Select id="contactType" options={['Bonded', 'Separation', 'Sliding']} className="w-[101px]" />
                        </div>
                        <label htmlFor="penType" className="mt-[17px]">
                            Penetration Type:
                        </label>
                        <Select
                            id="penType"
                            options={['Symmetric Contact', 'Unsymmetric Contact']}
                            className="mt-[5px] w-[101px] self-end"
                        />
                        <label htmlFor="stiff" className="mt-[14px]">
                            Stiffness Factor:
                        </label>
                        <Field id="stiff" value="1" className="mt-[3px] w-[92px] self-end" />
                        <label htmlFor="friction" className="mt-[9px]">
                            Coefficient of Friction:
                        </label>
                        <Field id="friction" value="0" className="mt-px w-[92px] self-end" />
                        <label htmlFor="offset" className="mt-[9px]">
                            Penetration Surface Offset (in):
                        </label>
                        <Field id="offset" value="0" className="mt-[3px] w-[92px] self-end" />
                        <label className="relative mt-[7px] flex items-center gap-[2px]">
                            <input
                                type="checkbox"
                                checked={maxDistance}
                                onChange={(e) => setMaxDistance(e.target.checked)}
                                className="h-[13px] w-[13px] appearance-none border border-[#333] bg-white"
                            />
                            {maxDistance && (
                                <svg width="13" height="13" viewBox="0 0 13 13" className="pointer-events-none absolute left-0">
                                    <path d="M2.500 6.500l3 3 5-6" fill="none" stroke="#333" strokeWidth="1.200" />
                                </svg>
                            )}
                            Max Activation Distance (in)
                        </label>
                        <Field label="Max Activation Distance" className="mt-2 w-[92px] self-end" />
                        <button type="button" className="mt-[13px] ml-12 h-[21px] w-[102px] border border-[#adadad] bg-[#e1e1e1]">
                            Advanced Options
                        </button>
                    </fieldset>
                </div>
            </div>

            <div className="flex h-[41px] items-start gap-[7px] border-t border-white px-3 pt-3">
                <ToolButton label="Collapse">
                    <svg width="11" height="12" viewBox="0 0 11 12" fill="none" stroke="#222" strokeWidth="1.500">
                        <path d="M2 5.500l3.500-3.500L9 5.500M2 10l3.500-3.500L9 10" />
                    </svg>
                </ToolButton>
                <ToolButton label="Highlight">
                    <svg width="17" height="11" viewBox="0 0 17 11">
                        <path d="M5.500 0v11M1 5.500h8M2 2l7 7M9 2l-7 7" stroke="#f0501e" strokeDasharray="2 1" />
                        <path d="M11.500 0v11M8 5.500h8M8 2l7 7M15 2l-7 7" stroke="#f0b070" strokeDasharray="2 1" />
                        <circle cx="8.500" cy="5.500" r="2" fill="#ffc84a" />
                    </svg>
                </ToolButton>
                <div className="ml-auto flex gap-[11px]">
                    <button type="button" className="h-[21px] w-[73px] border border-[#adadad] bg-[#e1e1e1]">
                        OK
                    </button>
                    <button type="button" className="h-[21px] w-[73px] border border-[#adadad] bg-[#e1e1e1]">
                        Cancel
                    </button>
                </div>
            </div>
        </section>
    );
}

export default function App() {
    return (
        <div className={`relative flex h-screen flex-col overflow-hidden bg-white leading-4 ${UI}`}>
            <div className="flex min-h-0 flex-1">
                <div className="flex min-w-0 flex-1 flex-col">
                    <TitleBar />
                    <Ribbon />
                    <div className="flex min-h-0 flex-1">
                        <ModelPanel />
                        <Viewport />
                    </div>
                    <footer className="flex h-6 shrink-0 items-center justify-between bg-[#eee] pl-px text-[11px] text-[#333]">
                        <span>Ready</span>
                        <div className="flex pr-[6px]">
                            <span className="w-[40px] border-l border-[#d4d4d4] text-center">3</span>
                            <span className="w-[40px] border-l border-[#d4d4d4] text-center">20</span>
                        </div>
                    </footer>
                </div>
                <div className="flex w-2 shrink-0 flex-col">
                    <div className="h-[426px]" />
                    <div className="flex-1 bg-black" />
                </div>
            </div>
            <div className="flex h-2 shrink-0 overflow-hidden bg-[#1b2e38] text-[11px] text-white">
                <span className="ml-[198px] w-12 bg-[#4a5860]" />
                <span className="mr-4 ml-auto">9:40 AM</span>
            </div>
            <SurfaceContact />
        </div>
    );
}
